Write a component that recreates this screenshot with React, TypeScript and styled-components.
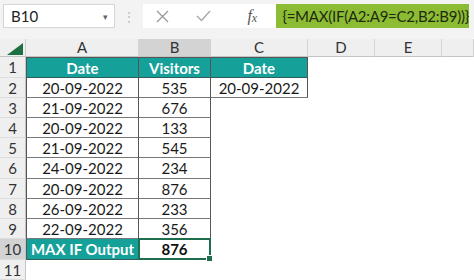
import React from "react";
import styled, { createGlobalStyle, css } from "styled-components";

const GlobalStyle = createGlobalStyle`
  html, body {
    margin: 0;
    padding: 0;
    background: #ffffff;
  }
  body {
    font-family: "Lato", "Open Sans", sans-serif;
  }
`;

const rows = [
  ["20-09-2022", "535"],
  ["21-09-2022", "676"],
  ["20-09-2022", "133"],
  ["21-09-2022", "545"],
  ["24-09-2022", "234"],
  ["20-09-2022", "876"],
  ["26-09-2022", "233"],
  ["22-09-2022", "356"],
];

const rowHeights = [21, 20, 20, 20, 20, 21, 20, 20, 20, 21, 20];

const App = () => {
  return (
    <>
      <GlobalStyle />
      <Page>
        <TopBar>
          <NameBox>
            <span>B10</span>
            <Caret>▾</Caret>
          </NameBox>
          <Dots>⋮</Dots>
          <FormulaBar>
            <IconSlot>
              <svg width="13" height="13" viewBox="0 0 13 13">
                <path d="M1 1 L12 12 M12 1 L1 12" stroke="#9a9a9a" strokeWidth="1.3" fill="none" />
              </svg>
            </IconSlot>
            <IconSlot>
              <svg width="15" height="12" viewBox="0 0 15 12">
                <path d="M1 6 L5.5 10.5 L14 1" stroke="#a8a8a8" strokeWidth="1.4" fill="none" />
              </svg>
            </IconSlot>
            <Fx>
              f<sub>x</sub>
            </Fx>
            <Formula>{"{=MAX(IF(A2:A9=C2,B2:B9))}"}</Formula>
          </FormulaBar>
        </TopBar>

        <Sheet style={{ gridTemplateRows: `18px ${rowHeights.map((h) => h + "px").join(" ")}` }}>
          <Corner>
            <svg width="16" height="12" viewBox="0 0 16 12">
              <polygon points="16,0 16,12 0,12" fill="#1f6f45" />
            </svg>
          </Corner>
          {["A", "B", "C", "D", "E", ""].map((c) => (
            <ColHead key={c || "F"} $active={c === "B"}>
              {c}
            </ColHead>
          ))}

          {/* row 1 */}
          <RowHead>1</RowHead>
          <Cell $head $left $top>Date</Cell>
          <Cell $head $top>Visitors</Cell>
          <Cell $head $top>Date</Cell>
          <Blank />
          <Blank />
          <Blank />

          {rows.map(([d, v], i) => (
            <React.Fragment key={i}>
              <RowHead>{i + 2}</RowHead>
              <Cell $left>{d}</Cell>
              <Cell>{v}</Cell>
              {i === 0 ? <Cell>20-09-2022</Cell> : <Blank />}
              <Blank />
              <Blank />
              <Blank />
            </React.Fragment>
          ))}

          <RowHead $active>10</RowHead>
          <Cell $head $left>MAX IF Output</Cell>
          <Selected>
            876
            <Handle />
          </Selected>
          <Blank />
          <Blank />
          <Blank />
          <Blank />

          <RowHead>11</RowHead>
          <Blank />
          <Blank />
          <Blank />
          <Blank />
          <Blank />
          <Blank />
        </Sheet>
      </Page>
    </>
  );
};

export default App;

const Page = styled.div`
  width: 474px;
  height: 280px;
  overflow: hidden;
  background: #ffffff;
`;

const TopBar = styled.div`
  height: 39px;
  box-sizing: border-box;
  padding: 4px 5px 0 3px;
  background: #f3f3f3;
  display: flex;
  align-items: flex-start;
`;

const NameBox = styled.div`
  width: 119px;
  height: 24px;
  box-sizing: border-box;
  background: #ffffff;
  border: 1px solid #d6d6d6;
  display: flex;
  align-items: center;
  justify-content: space-between;
  padding: 0 6px 0 7px;
  font-size: 15px;
  color: #222;
`;

const Caret = styled.span`
  font-size: 9px;
  color: #666;
`;

const Dots = styled.div`
  width: 31px;
  height: 24px;
  display: flex;
  align-items: center;
  justify-content: center;
  color: #c0c0c0;
  font-size: 14px;
`;

const FormulaBar = styled.div`
  flex: 1;
  height: 24px;
  background: #ffffff;
  display: flex;
  align-items: center;
  padding-left: 12px;
`;

const IconSlot = styled.div`
  width: 39px;
  display: flex;
  align-items: center;
  justify-content: flex-start;
  padding-left: 1px;
`;

const Fx = styled.div`
  width: 41px;
  font-family: "Liberation Serif", "DejaVu Serif", serif;
  font-style: italic;
  font-size: 16px;
  color: #555;
  padding-left: 12px;
  box-sizing: border-box;
  sub {
    font-size: 12px;
    vertical-align: -1px;
  }
`;

const Formula = styled.div`
  flex: 1;
  height: 24px;
  background: #8cbc34;
  color: #1e2a10;
  font-size: 15px;
  letter-spacing: -0.25px;
  display: flex;
  align-items: center;
  padding-left: 6px;
  white-space: nowrap;
`;

const Sheet = styled.div`
  display: grid;
  grid-template-columns: 26px 113px 72px 97px 67px 67px 1fr;
  font-size: 15px;
`;

const Corner = styled.div`
  background: #efefef;
  border-right: 1px solid #d0d0d0;
  border-bottom: 1px solid #c4c4c4;
  display: flex;
  align-items: flex-end;
  justify-content: flex-end;
  padding: 0 2px 1px 0;
`;

const ColHead = styled.div<{ $active?: boolean }>`
  background: ${(p) => (p.$active ? "#d3d3d3" : "#efefef")};
  border-right: 1px solid #d4d4d4;
  border-bottom: 1px solid #c4c4c4;
  color: #333;
  font-size: 15px;
  display: flex;
  align-items: center;
  justify-content: center;
  line-height: 1;
`;

const RowHead = styled.div<{ $active?: boolean }>`
  background: ${(p) => (p.$active ? "#d3d3d3" : "#efefef")};
  border-right: 1px solid #c4c4c4;
  border-bottom: 1px solid #dcdcdc;
  color: #333;
  display: flex;
  align-items: center;
  justify-content: center;
`;

const Cell = styled.div<{ $head?: boolean; $left?: boolean; $top?: boolean }>`
  border-right: 1px solid #555;
  border-bottom: 1px solid #777;
  ${(p) => p.$left && css`border-left: 1px solid #555;`}
  ${(p) => p.$top && css`border-top: 1px solid #555;`}
  display: flex;
  align-items: center;
  justify-content: center;
  color: #1a1a1a;
  white-space: nowrap;
  ${(p) =>
    p.$head &&
    css`
      background: #15a09a;
      color: #ffffff;
      font-weight: 700;
      border-bottom-color: #2f5e5a;
    `}
`;

const Selected = styled.div`
  position: relative;
  border: 2px solid #1e6e4e;
  margin: -1px 0 0 -1px;
  display: flex;
  align-items: center;
  justify-content: center;
  font-weight: 700;
  color: #111;
`;

const Handle = styled.span`
  position: absolute;
  right: -4px;
  bottom: -4px;
  width: 5px;
  height: 5px;
  background: #1e6e4e;
  border: 1px solid #ffffff;
`;

const Blank = styled.div`
  background: #ffffff;
`;
